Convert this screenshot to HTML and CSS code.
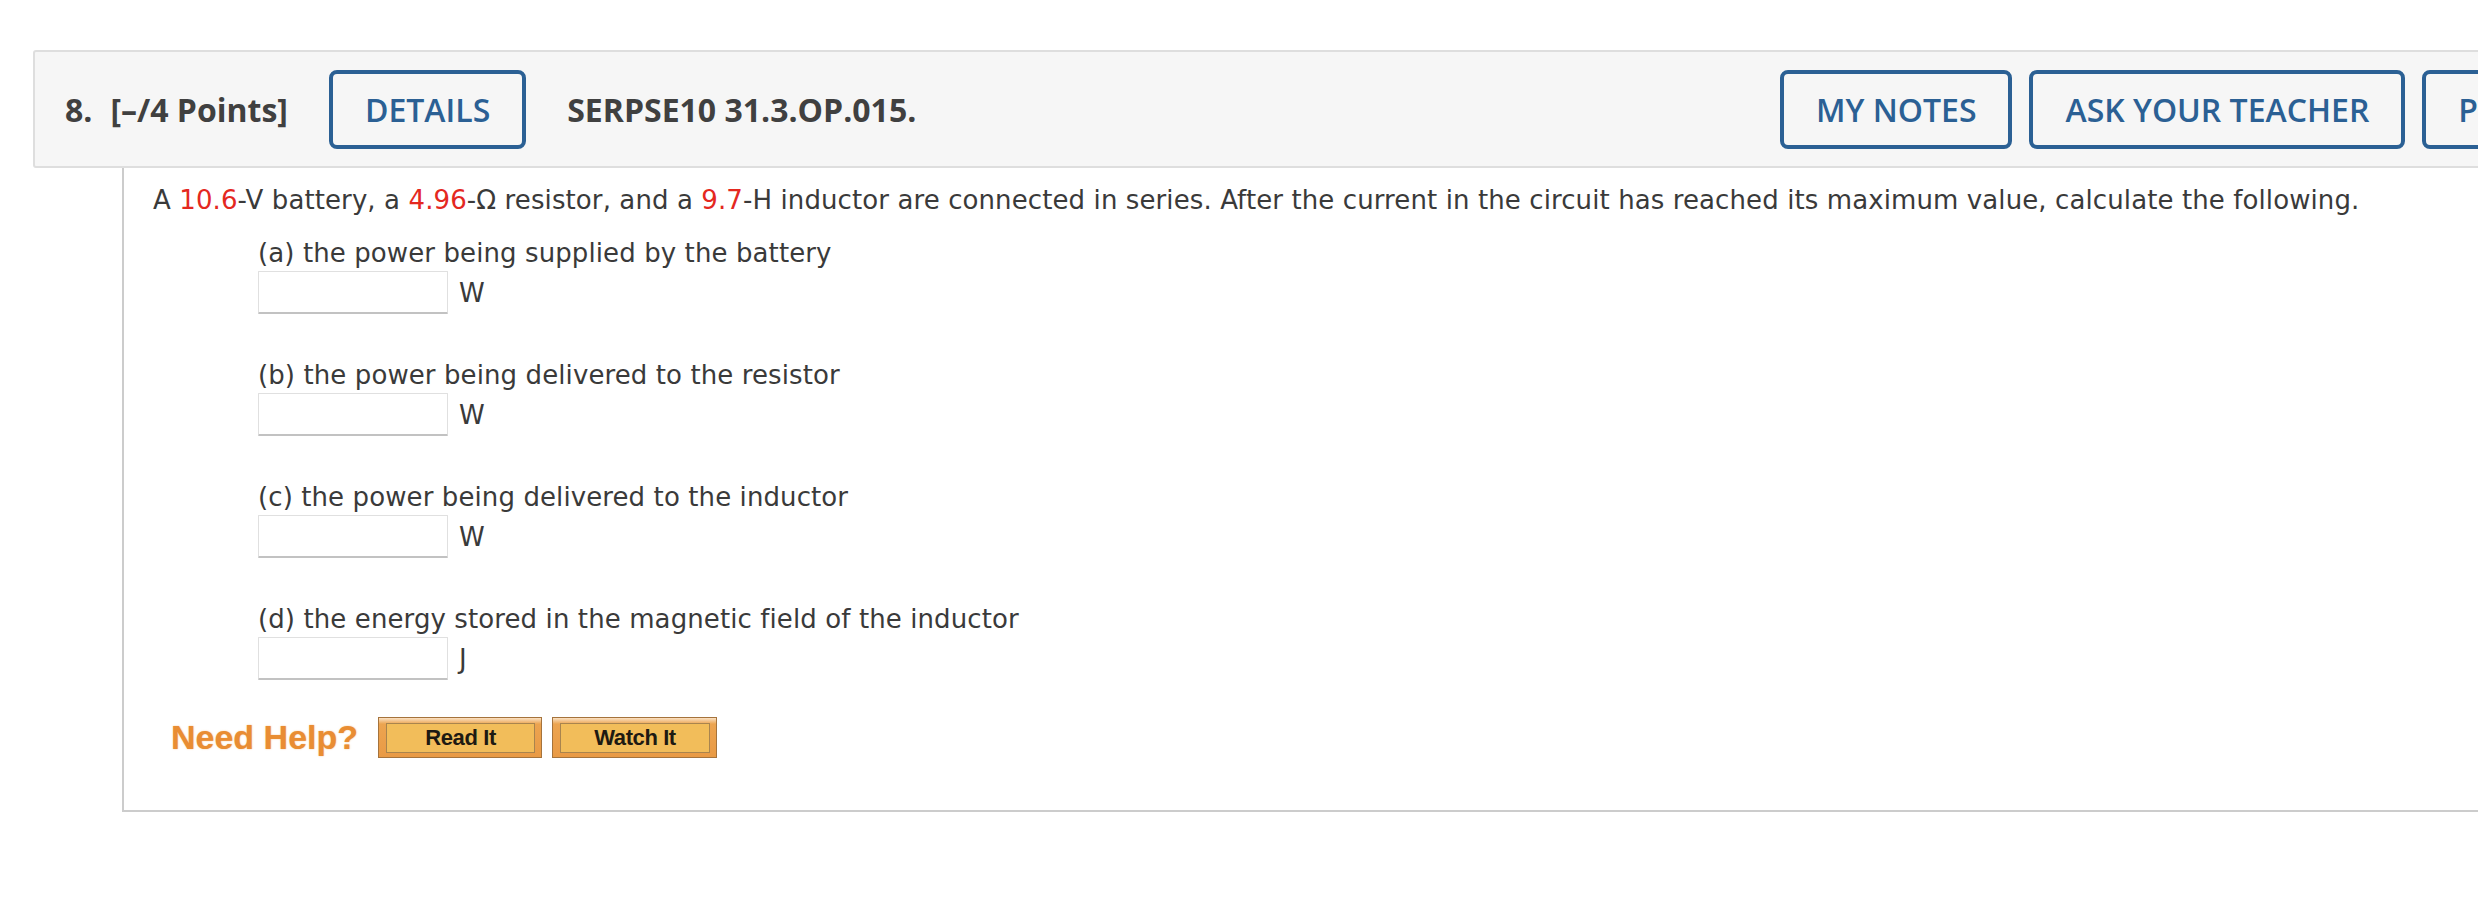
FILE: index.html
```html
<!DOCTYPE html>
<html lang="en">
<head>
<meta charset="utf-8">
<title>Question 8</title>
<link rel="stylesheet" href="styles.css">
</head>
<body>
<div class="page">
  <div class="qhead">
    <span class="qnum">8.</span>
    <span class="qpts">[–/4 Points]</span>
    <button class="hbtn details">DETAILS</button>
    <span class="qcode">SERPSE10 31.3.OP.015.</span>
    <div class="hright">
      <button class="hbtn">MY NOTES</button>
      <button class="hbtn">ASK YOUR TEACHER</button>
      <button class="hbtn">PRACTICE ANOTHER</button>
    </div>
  </div>
  <div class="qbody">
    <p class="qtext">A <span class="val">10.6</span>-V battery, a <span class="val">4.96</span>-Ω resistor, and a <span class="val">9.7</span>-H inductor are connected in series. After the current in the circuit has reached its maximum value, calculate the following.</p>
    <div class="parts">
      <div class="part">
        <div class="part-label">(a) the power being supplied by the battery</div>
        <div class="answer"><input class="ans-input" type="text"><span class="unit">W</span></div>
      </div>
      <div class="part">
        <div class="part-label">(b) the power being delivered to the resistor</div>
        <div class="answer"><input class="ans-input" type="text"><span class="unit">W</span></div>
      </div>
      <div class="part">
        <div class="part-label">(c) the power being delivered to the inductor</div>
        <div class="answer"><input class="ans-input" type="text"><span class="unit">W</span></div>
      </div>
      <div class="part">
        <div class="part-label">(d) the energy stored in the magnetic field of the inductor</div>
        <div class="answer"><input class="ans-input" type="text"><span class="unit">J</span></div>
      </div>
    </div>
    <div class="help">
      <span class="help-label">Need Help?</span>
      <button class="help-btn"><span class="help-inner">Read It</span></button>
      <button class="help-btn"><span class="help-inner">Watch It</span></button>
    </div>
  </div>
</div>
</body>
</html>
```
FILE: styles.css
```css
html, body {
  margin: 0;
  padding: 0;
  background: #ffffff;
  overflow: hidden;
}

.page {
  width: 2900px;
  padding: 50px 0 0 33px;
}

.qhead {
  box-sizing: border-box;
  width: 2801px;
  height: 118px;
  display: flex;
  align-items: center;
  padding: 0 30px;
  background: #f6f6f6;
  border: 2px solid #dedede;
  border-radius: 3px;
  font-family: "Open Sans", "Liberation Sans", sans-serif;
  color: #404040;
}

.qnum {
  font-size: 32px;
  font-weight: 700;
  margin-right: 18px;
}

.qpts {
  font-size: 32px;
  font-weight: 700;
  margin-right: 41px;
}

.qcode {
  font-size: 32px;
  font-weight: 700;
  margin-left: 41px;
}

.hright {
  margin-left: auto;
  display: flex;
  gap: 17px;
}

.hbtn {
  box-sizing: border-box;
  height: 79px;
  padding: 0 32px;
  border: 4px solid #2b6094;
  border-radius: 8px;
  background: transparent;
  color: #2b6094;
  font-family: "Open Sans", "Liberation Sans", sans-serif;
  font-size: 32px;
  font-weight: 600;
  line-height: 71px;
  white-space: nowrap;
}

.qbody {
  margin-left: 89px;
  border-left: 2px solid #cccccc;
  border-bottom: 2px solid #cccccc;
  padding: 14px 0 52px 29px;
  font-family: "DejaVu Sans", Verdana, sans-serif;
  font-size: 26px;
  letter-spacing: 0.1px;
  color: #3a3a3a;
}

.qtext {
  margin: 0;
  line-height: 36px;
  white-space: nowrap;
}

.val {
  color: #e4281f;
}

.parts {
  margin: 17px 0 0 105px;
  display: flex;
  flex-direction: column;
  gap: 43px;
}

.part-label {
  line-height: 36px;
}

.answer {
  display: flex;
  align-items: center;
  gap: 11px;
}

.ans-input {
  box-sizing: border-box;
  width: 190px;
  height: 43px;
  margin: 0;
  border: 1px solid #e0e0e0;
  border-bottom: 2px solid #c2c2c2;
  border-radius: 1px;
  background: #ffffff;
}

.unit {
  line-height: 36px;
}

.help {
  margin: 37px 0 0 18px;
  display: flex;
  align-items: center;
}

.help-label {
  font-family: "Liberation Sans", Arial, sans-serif;
  font-weight: 700;
  font-size: 34px;
  letter-spacing: 0;
  color: #e98d33;
  text-shadow: 0 0 1.5px rgba(236, 150, 60, 0.7);
  margin-right: 20px;
}

.help-btn {
  box-sizing: border-box;
  height: 41px;
  width: 164px;
  margin: 0 10px 0 0;
  padding: 5px 6px 4px 7px;
  border: 1px solid #a5733c;
  background: linear-gradient(#fbe1c3 0, #eca450 6px, #e99a45 100%);
  display: flex;
}

.help-btn + .help-btn {
  width: 165px;
}

.help-inner {
  flex: 1;
  display: flex;
  align-items: center;
  justify-content: center;
  border: 1px solid #a9844e;
  background: #f2bd5a;
  font-family: "Liberation Sans", Arial, sans-serif;
  font-weight: 700;
  font-size: 22px;
  color: #1e1a12;
  letter-spacing: -0.4px;
}
```
